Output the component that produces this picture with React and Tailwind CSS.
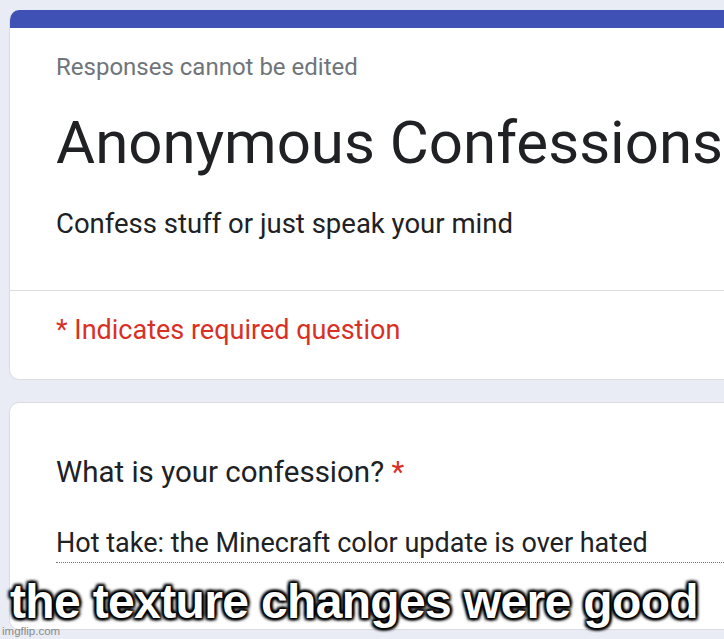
import React from 'react';

export default function App() {
  return (
    <div className="relative w-[724px] h-[639px] overflow-hidden bg-[#e9ebf5]">
      <div className="flex flex-col gap-[22px] pt-[10px] pl-[9px] w-[780px] font-['Roboto',sans-serif]">
        <div className="rounded-[10px] overflow-hidden bg-white border border-[#dadce0] border-t-0">
          <div className="h-[18px] bg-[#3f51b5]" />
          <div className="pl-[46px] pt-[25px] pb-[48px]">
            <div className="text-[24px] leading-[28px] text-[#70757a]">Responses cannot be edited</div>
            <div className="mt-[26px] text-[60px] leading-[72px] text-[#202124]">Anonymous Confessions</div>
            <div className="mt-[27px] text-[27.5px] leading-[36px] text-[#202124]">Confess stuff or just speak your mind</div>
          </div>
          <div className="border-t border-[#dadce0]" />
          <div className="pl-[46px] pt-[21px] pb-[31px] text-[27px] leading-[36px] text-[#d93025]">
            * Indicates required question
          </div>
        </div>
        <div className="rounded-[10px] bg-white border border-[#dadce0] h-[228px] pl-[46px] pt-[51px]">
          <div className="text-[29.5px] leading-[36px] text-[#202124]">
            What is your confession? <span className="text-[#d93025]">*</span>
          </div>
          <div className="mt-[36px] text-[27px] leading-[34px] text-[#202124] pb-[2px] border-b border-dotted border-[#70757a] w-[680px]">
            Hot take: the Minecraft color update is over hated
          </div>
        </div>
      </div>
      <div
        className="absolute left-[10px] top-[574px] text-[48px] leading-[56px] font-bold text-white whitespace-nowrap font-['Liberation_Sans',Arial,sans-serif] tracking-[-0.65px]"
        style={{ textShadow: '0 0 2px #000, 0 0 3px #000, 0 0 4px #000, 2px 2px 3px #000, -2px -2px 3px #000, 2px -2px 3px #000, -2px 2px 3px #000' }}
      >
        the texture changes were good
      </div>
      <div className="absolute left-[2px] top-[624px] text-[11.5px] leading-[14px] text-[#8a8a8a] font-['Liberation_Sans',Arial,sans-serif]">
        imgflip.com
      </div>
    </div>
  );
}
